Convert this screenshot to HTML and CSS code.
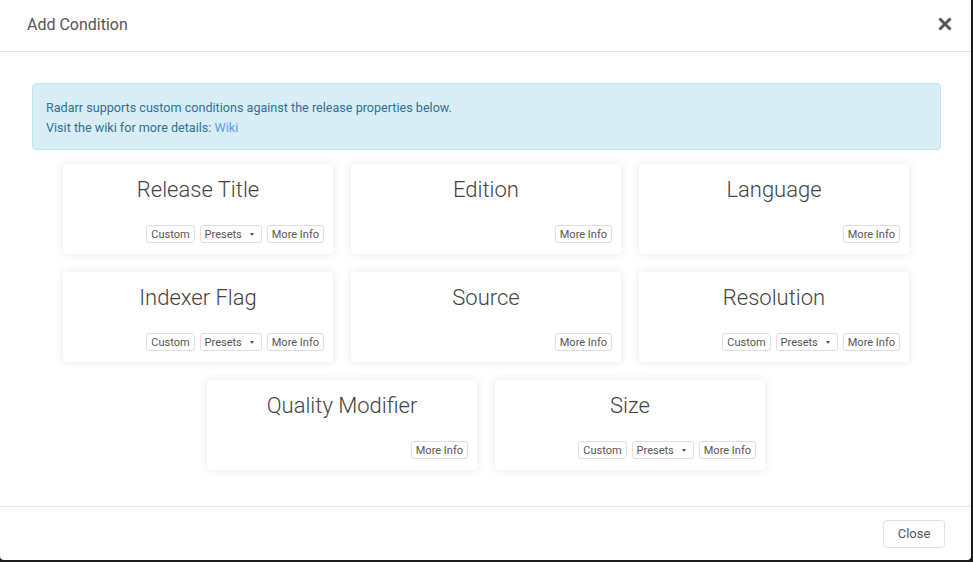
FILE: index.html
```html
<!DOCTYPE html>
<html lang="en">
<head>
<meta charset="utf-8">
<title>Add Condition</title>
<link rel="stylesheet" href="styles.css">
</head>
<body>
<div class="modal">
  <header class="modal-header">
    <span class="modal-title">Add Condition</span>
    <button class="modal-close" aria-label="Close">
      <svg width="14" height="14" viewBox="0 0 14 14"><path d="M2.5 2.5 L11.5 11.5 M11.5 2.5 L2.5 11.5" stroke="#555" stroke-width="3" stroke-linecap="square"/></svg>
    </button>
  </header>
  <main class="modal-body">
    <div class="alert">
      <div>Radarr supports custom conditions against the release properties below.</div>
      <div>Visit the wiki for more details: <a class="link" href="#">Wiki</a></div>
    </div>
    <div class="cards">
      <div class="card">
        <div class="card-name">Release Title</div>
        <div class="card-actions">
          <span class="btn">Custom</span>
          <span class="btn">Presets <span class="caret"></span></span>
          <span class="btn">More Info</span>
        </div>
      </div>
      <div class="card">
        <div class="card-name">Edition</div>
        <div class="card-actions">
          <span class="btn">More Info</span>
        </div>
      </div>
      <div class="card">
        <div class="card-name">Language</div>
        <div class="card-actions">
          <span class="btn">More Info</span>
        </div>
      </div>
      <div class="card">
        <div class="card-name">Indexer Flag</div>
        <div class="card-actions">
          <span class="btn">Custom</span>
          <span class="btn">Presets <span class="caret"></span></span>
          <span class="btn">More Info</span>
        </div>
      </div>
      <div class="card">
        <div class="card-name">Source</div>
        <div class="card-actions">
          <span class="btn">More Info</span>
        </div>
      </div>
      <div class="card">
        <div class="card-name">Resolution</div>
        <div class="card-actions">
          <span class="btn">Custom</span>
          <span class="btn">Presets <span class="caret"></span></span>
          <span class="btn">More Info</span>
        </div>
      </div>
      <div class="card">
        <div class="card-name">Quality Modifier</div>
        <div class="card-actions">
          <span class="btn">More Info</span>
        </div>
      </div>
      <div class="card">
        <div class="card-name">Size</div>
        <div class="card-actions">
          <span class="btn">Custom</span>
          <span class="btn">Presets <span class="caret"></span></span>
          <span class="btn">More Info</span>
        </div>
      </div>
    </div>
  </main>
  <footer class="modal-footer">
    <button class="btn-close">Close</button>
  </footer>
</div>
</body>
</html>
```

FILE: styles.css
```css
html, body {
  margin: 0;
  padding: 0;
}
body {
  background: #1c1c1c;
  font-family: Roboto, "Open Sans", "Liberation Sans", sans-serif;
  width: 973px;
  height: 562px;
  overflow: hidden;
}
.modal {
  width: 971px;
  height: 560px;
  background: #fff;
  border-radius: 0 0 4px 4px;
  display: flex;
  flex-direction: column;
  box-sizing: border-box;
}
.modal-header {
  height: 51px;
  border-bottom: 1px solid #e5e5e5;
  display: flex;
  align-items: center;
  justify-content: space-between;
  padding: 0 19px 0 27px;
  flex-shrink: 0;
}
.modal-title {
  font-size: 16px;
  color: #555;
  padding-bottom: 3px;
}
.modal-close {
  border: none;
  background: none;
  padding: 0;
  width: 14px;
  height: 14px;
  display: flex;
  margin-bottom: 3px;
}
.modal-body {
  flex: 1;
  padding: 31px 30px 0 32px;
}
.alert {
  background: #d9edf7;
  border: 1px solid #bce8f1;
  border-radius: 4px;
  color: #31708f;
  font-size: 12.6px;
  line-height: 20px;
  padding: 14px 13px 11px 13px;
  margin-bottom: 5px;
}
.link {
  color: #5d9cec;
  text-decoration: none;
}
.cards {
  display: flex;
  flex-wrap: wrap;
  justify-content: center;
  margin-right: 1px;
}
.card {
  width: 270px;
  height: 90px;
  margin: 9px;
  box-sizing: border-box;
  background: #fff;
  border-radius: 4px;
  box-shadow: 0 0 10px rgba(0, 0, 0, 0.1);
  padding: 12px 9px 11px 9px;
  display: flex;
  flex-direction: column;
  justify-content: space-between;
}
.card-name {
  text-align: center;
  font-size: 22px;
  font-weight: 300;
  color: #444;
  line-height: 28px;
}
.card-actions {
  display: flex;
  justify-content: flex-end;
  gap: 5px;
}
.btn {
  display: inline-flex;
  align-items: center;
  height: 18px;
  box-sizing: border-box;
  padding: 0 4px;
  border: 1px solid #e0e0e0;
  border-radius: 3px;
  font-size: 11px;
  color: #555;
  background: #fff;
}
.caret {
  display: inline-block;
  width: 0;
  height: 0;
  border-left: 2.5px solid transparent;
  border-right: 2.5px solid transparent;
  border-top: 3px solid #555;
  margin-left: 8px;
  margin-right: 3px;
}
.modal-footer {
  height: 53px;
  border-top: 1px solid #e5e5e5;
  display: flex;
  align-items: center;
  justify-content: flex-end;
  padding: 0 26px 0 0;
  flex-shrink: 0;
}
.btn-close {
  width: 62px;
  height: 28px;
  border: 1px solid #e1e1e1;
  border-radius: 4px;
  background: #fff;
  font-family: Roboto, "Liberation Sans", sans-serif;
  font-size: 13px;
  color: #555;
  padding: 0;
}
```
